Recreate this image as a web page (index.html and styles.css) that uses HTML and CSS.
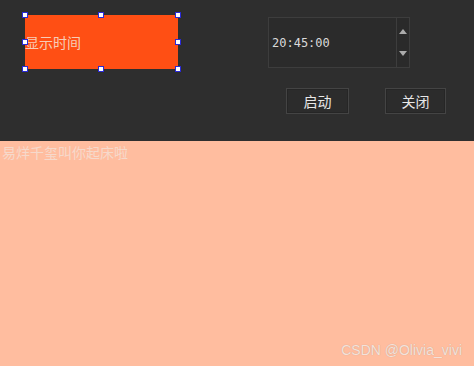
FILE: index.html
```html
<!DOCTYPE html>
<html lang="zh-CN">
<head>
  <meta charset="UTF-8" />
  <title>闹钟</title>
  <link rel="stylesheet" href="styles.css">
</head>
<body>
  <div class="panel">
    <div class="row top">
      <div class="label-box">
        <span class="label-text">显示时间</span>
        <span class="handle h-tl"></span>
        <span class="handle h-tc"></span>
        <span class="handle h-tr"></span>
        <span class="handle h-ml"></span>
        <span class="handle h-mr"></span>
        <span class="handle h-bl"></span>
        <span class="handle h-bc"></span>
        <span class="handle h-br"></span>
      </div>
      <div class="spinbox">
        <div class="spin-value">20:45:00</div>
        <div class="spin-arrows">
          <span class="arrow up"></span>
          <span class="arrow down"></span>
        </div>
      </div>
    </div>
    <div class="row buttons">
      <button class="btn btn-start">启动</button>
      <button class="btn btn-close">关闭</button>
    </div>
  </div>

  <div class="message">
    <p class="msg-text">易烊千玺叫你起床啦</p>
    <span class="watermark">CSDN @Olivia_vivi</span>
  </div>
</body>
</html>
```

FILE: styles.css
```css
html, body {
  margin: 0;
  padding: 0;
  height: 100%;
}

body {
  font-family: "Noto Sans CJK SC", "Noto Sans", sans-serif;
  background-color: #ffbd9f;
  display: flex;
  flex-direction: column;
}

.panel {
  background-color: #2e2e2e;
  height: 141px;
  box-sizing: border-box;
  padding-top: 15px;
}

.row {
  display: flex;
}

.top {
  align-items: flex-start;
}

.label-box {
  position: relative;
  margin-left: 25px;
  width: 153px;
  height: 54px;
  background-color: #ff4f14;
  display: flex;
  align-items: center;
}

.label-text {
  color: #f7cdb8;
  font-size: 14px;
  line-height: 1;
}

.handle {
  position: absolute;
  width: 4px;
  height: 4px;
  background-color: #fff;
  border: 1px solid #2a2ad8;
}

.h-tl, .h-tc, .h-tr { top: -3px; }
.h-ml, .h-mr { top: 24px; }
.h-bl, .h-bc, .h-br { bottom: -3px; }
.h-tl, .h-ml, .h-bl { left: -3px; }
.h-tc, .h-bc { left: 73px; }
.h-tr, .h-mr, .h-br { right: -3px; }

.spinbox {
  margin-left: 90px;
  margin-top: 2px;
  width: 142px;
  height: 51px;
  box-sizing: border-box;
  border: 1px solid #3d3d3d;
  background-color: #2b2b2b;
  display: flex;
}

.spin-value {
  flex: 1;
  display: flex;
  align-items: center;
  padding-left: 3px;
  color: #dadada;
  font-family: "DejaVu Sans Mono", "Liberation Mono", monospace;
  font-size: 12px;
}

.spin-arrows {
  width: 13px;
  border-left: 1px solid #3d3d3d;
  background-color: #2a2a2a;
  display: flex;
  flex-direction: column;
  align-items: center;
  justify-content: space-between;
  padding: 11px 0;
  box-sizing: border-box;
}

.arrow {
  width: 0;
  height: 0;
  border-left: 4px solid transparent;
  border-right: 4px solid transparent;
}

.arrow.up {
  border-bottom: 5px solid #ababab;
}

.arrow.down {
  border-top: 5px solid #ababab;
}

.buttons {
  justify-content: flex-end;
  margin-top: 19px;
  padding-right: 28px;
  gap: 36px;
}

.btn {
  height: 26px;
  background-color: #2c2c2c;
  color: #e8e8e8;
  border: 1px solid #444;
  box-shadow: inset 0 0 0 1px #262626;
  font-family: "Noto Sans CJK SC", sans-serif;
  font-size: 14px;
  padding: 0;
  cursor: pointer;
}

.btn-start {
  width: 63px;
}

.btn-close {
  width: 61px;
}

.message {
  flex: 1;
  position: relative;
}

.msg-text {
  margin: 0;
  padding: 3px 0 0 2px;
  color: #f6d9cb;
  font-size: 14px;
  line-height: 17px;
}

.watermark {
  position: absolute;
  right: 12px;
  bottom: 8px;
  color: #f4e2da;
  font-family: "Liberation Sans", Arial, sans-serif;
  font-size: 14px;
  text-shadow: 0 0 1px #c89c88;
}
```
